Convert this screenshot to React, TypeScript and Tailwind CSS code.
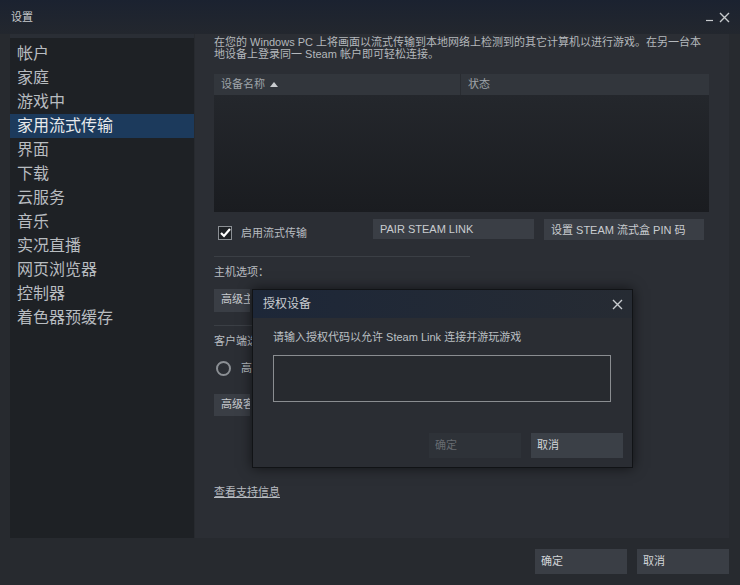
const sidebarItems = [
  "帐户",
  "家庭",
  "游戏中",
  "家用流式传输",
  "界面",
  "下载",
  "云服务",
  "音乐",
  "实况直播",
  "网页浏览器",
  "控制器",
  "着色器预缓存",
];

function Btn({ label, className }: { label: string; className: string }) {
  return (
    <div className={`flex items-start bg-[#3a3e45] pl-[7px] pt-[3px] text-[11px] leading-[14px] text-[#c9ccd0] ${className}`}>
      {label}
    </div>
  );
}

function AuthDialog() {
  return (
    <div className="absolute left-[57px] top-[255px] flex h-[179px] w-[381px] flex-col border border-[#111316] bg-[#2a2d33] shadow-[0_0_12px_rgba(0,0,0,0.6)]">
      <div className="flex h-[28px] items-center justify-between bg-gradient-to-r from-[#1d2738] to-[#262b33] pl-[10px] pr-[9px]">
        <span className="text-[12px] text-[#c9ccd0]">授权设备</span>
        <svg width="11" height="11" viewBox="0 0 11 11" className="text-[#c9ccd0]">
          <path d="M1 1 L10 10 M10 1 L1 10" stroke="currentColor" strokeWidth="1.4" />
        </svg>
      </div>
      <div className="flex flex-1 flex-col pl-[20px] pr-[9px] pt-[13px]">
        <div className="text-[11px] leading-[12px] text-[#bcc0c4]">请输入授权代码以允许 Steam Link 连接并游玩游戏</div>
        <div className="mt-[12px] h-[47px] w-[338px] border border-[#8a8d91] bg-[#272a2f]" />
        <div className="mt-[31px] flex justify-end gap-[10px]">
          <div className="flex h-[25px] w-[92px] items-center bg-[#2e3238] pl-[6px] text-[11px] text-[#676b70]">确定</div>
          <div className="flex h-[25px] w-[92px] items-center bg-[#3b4047] pl-[6px] text-[11px] text-[#d2d5d8]">取消</div>
        </div>
      </div>
    </div>
  );
}

export default function App() {
  return (
    <div className="flex h-[585px] w-[740px] flex-col overflow-hidden bg-[#272a2f] font-['Liberation_Sans','Noto_Sans_CJK_SC',sans-serif]">
      <div className="flex h-[34px] shrink-0 items-center justify-between bg-gradient-to-b from-[#1b2230] to-[#23272e] pl-[11px] pr-[10px]">
        <span className="text-[11px] text-[#c7cacd]">设置</span>
        <div className="flex items-center gap-[5px] text-[#c7cacd]">
          <svg width="9" height="10" viewBox="0 0 9 10">
            <path d="M1 8.5 H8" stroke="currentColor" strokeWidth="1.2" />
          </svg>
          <svg width="11" height="11" viewBox="0 0 11 11">
            <path d="M1 1 L10 10 M10 1 L1 10" stroke="currentColor" strokeWidth="1.4" />
          </svg>
        </div>
      </div>

      <div className="flex h-[504px] shrink-0 pl-[10px] pr-[11px]">
        <div className="w-[184px] border-t-[4px] border-[#2a2e35] bg-[#1e2125] pt-[4px]">
          {sidebarItems.map((item) => (
            <div
              key={item}
              className={`flex h-[24px] items-center pl-[7px] text-[16px] ${
                item === "家用流式传输" ? "bg-[#1c3a5c] text-[#e8eaec]" : "text-[#b8bcc0]"
              }`}
            >
              {item}
            </div>
          ))}
        </div>

        <div className="relative ml-[1px] w-[534px] bg-[#2b2e34] pl-[19px] pt-[2px]">
          <div className="text-[11px] leading-[12px] text-[#b4b8bc]">
            在您的 Windows PC 上将画面以流式传输到本地网络上检测到的其它计算机以进行游戏。在另一台本
            <br />
            地设备上登录同一 Steam 帐户即可轻松连接。
          </div>

          <div className="mt-[14px] w-[495px]">
            <div className="flex h-[21px] items-center bg-[#32363c] text-[11px] text-[#9fa4a9]">
              <div className="flex h-full w-[247px] items-center gap-[5px] border-r border-[#292c31] pl-[7px]">
                设备名称
                <svg width="8" height="5" viewBox="0 0 8 5">
                  <path d="M0 5 L4 0 L8 5 Z" fill="#c9ccd0" />
                </svg>
              </div>
              <div className="pl-[7px]">状态</div>
            </div>
            <div className="h-[117px] bg-gradient-to-b from-[#24272c] to-[#1a1c20]" />
          </div>

          <div className="mt-[7px] flex h-[21px] items-start">
            <div className="flex w-[159px] items-center pl-[4px] pt-[6px]">
              <div className="flex h-[14px] w-[14px] items-center justify-center border border-[#8b8f94] bg-[#1e2125]">
                <svg width="11" height="10" viewBox="0 0 11 10">
                  <path d="M1 5 L4 8 L10 1" stroke="#ffffff" strokeWidth="2.2" fill="none" />
                </svg>
              </div>
              <span className="ml-[9px] text-[11px] text-[#b8bcc0]">启用流式传输</span>
            </div>
            <Btn label="PAIR STEAM LINK" className="h-[20px] w-[161px]" />
            <Btn label="设置 STEAM 流式盒 PIN 码" className="ml-[10px] h-[21px] w-[160px] pt-[4px]" />
          </div>

          <div className="mt-[16px] h-px w-[256px] bg-[#3b3f45]" />
          <div className="mt-[8px] text-[11px] leading-[14px] text-[#b8bcc0]">主机选项：</div>
          <Btn label="高级主机选项" className="mt-[10px] h-[23px] w-[36px] items-center overflow-hidden whitespace-nowrap pt-0" />

          <div className="mt-[13px] h-px w-[256px] bg-[#3b3f45]" />
          <div className="mt-[8px] text-[11px] leading-[14px] text-[#b8bcc0]">客户端选项：</div>
          <div className="mt-[13px] flex h-[15px] items-center pl-[2px]">
            <div className="h-[15px] w-[15px] rounded-full border-2 border-[#8b8f94]" />
            <span className="ml-[10px] text-[11px] text-[#b8bcc0]">高</span>
          </div>
          <Btn label="高级客户端选项" className="mt-[18px] h-[22px] w-[36px] items-center overflow-hidden whitespace-nowrap pt-0" />

          <div className="mt-[69px] text-[11px] leading-[14px] text-[#b8bcc0] underline">查看支持信息</div>

          <AuthDialog />
        </div>
      </div>

      <div className="flex flex-1 justify-end gap-[10px] pr-[11px] pt-[11px]">
        <div className="flex h-[25px] w-[92px] items-center bg-[#3a3e45] pl-[6px] text-[11px] text-[#d2d5d8]">确定</div>
        <div className="flex h-[25px] w-[92px] items-center bg-[#3a3e45] pl-[6px] text-[11px] text-[#d2d5d8]">取消</div>
      </div>
    </div>
  );
}
